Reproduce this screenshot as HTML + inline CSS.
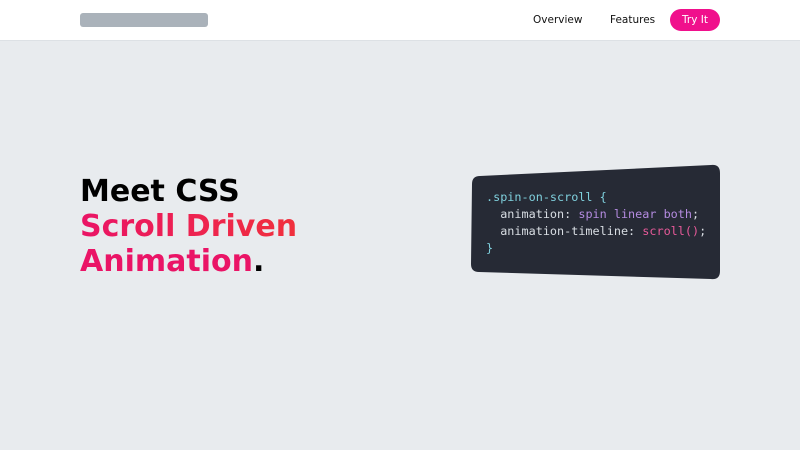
<!DOCTYPE html>
<html><head><style>
body{margin:0;width:800px;height:450px;background:#e8ebee;font-family:"DejaVu Sans","Liberation Sans",sans-serif;position:relative;overflow:hidden}
.nav{position:absolute;left:0;top:0;width:800px;height:40px;background:#fff;border-bottom:1px solid #dde1e5}
.logo{position:absolute;left:80px;top:13px;width:128px;height:14px;background:#aab2ba;border-radius:3px}
.nav a{position:absolute;top:14px;font-size:10.5px;color:#111;text-decoration:none}
.btn{position:absolute;left:670px;top:9px;width:50px;height:22px;border-radius:11px;background:#f0108c;color:#fff;font-size:10.5px;line-height:22px;text-align:center}
h1{position:absolute;left:80px;top:174px;margin:0;font-size:30px;line-height:35px;font-weight:bold;color:#000}
.g{background:linear-gradient(90deg,#ea1466,#f0303c);-webkit-background-clip:text;color:transparent}
.p{color:#ea1466}
pre{position:absolute;left:486px;top:189px;margin:0;font-family:"DejaVu Sans Mono",monospace;font-size:11.8px;line-height:17px;color:#d8dde3}
.c{color:#7fd0dd}.v{color:#b48be0}.f{color:#e85a9a}
</style></head><body>
<div class="nav"><div class="logo"></div><a style="left:533px">Overview</a><a style="left:610px">Features</a><div class="btn">Try It</div></div>
<h1>Meet CSS<br><span class="g">Scroll Driven</span><br><span class="p">Animation</span>.</h1>
<svg style="position:absolute;left:0;top:0" width="800" height="450"><path d="M480 176 L711 165 Q720 164 720 173 L720 271 Q720 280 711 279 L479 272 Q471 272 471 264 L472 184 Q472 176 480 176 Z" fill="#262a35"/></svg>
<pre><span class="c">.spin-on-scroll {</span>
  animation: <span class="v">spin linear both</span>;
  animation-timeline: <span class="f">scroll()</span>;
<span class="c">}</span></pre>
</body></html>
